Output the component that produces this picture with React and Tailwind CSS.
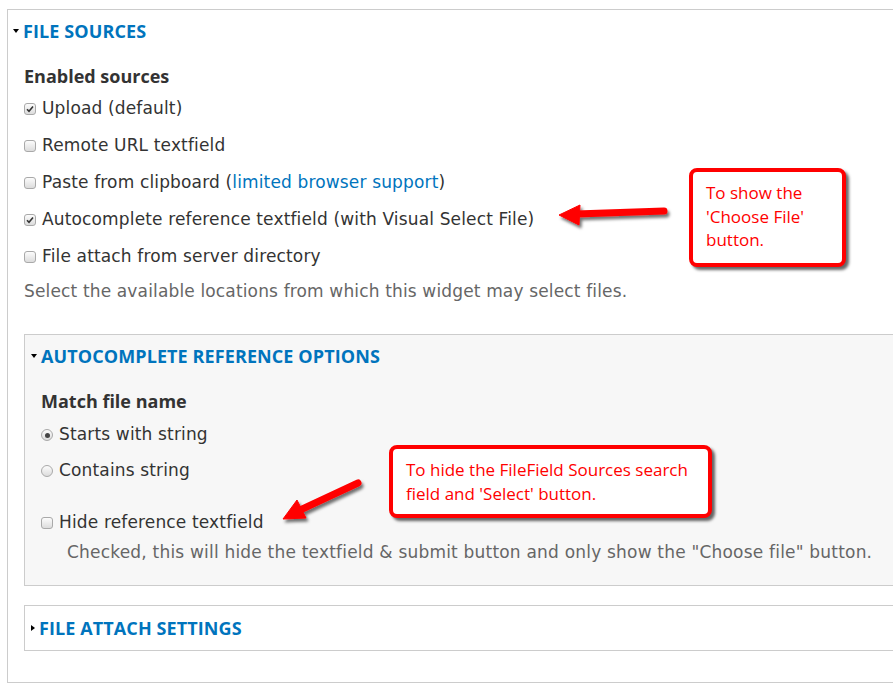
import React from "react";

const body = { fontFamily: '"DejaVu Sans", sans-serif' };
const head = { fontFamily: '"Open Sans", sans-serif' };

function Check({ checked }) {
  return (
    <span className="flex h-[12px] w-[12px] shrink-0 items-center justify-center rounded-[3px] border border-[#a9a9a9] bg-gradient-to-b from-[#fcfcfc] to-[#dcdcdc]">
      {checked && (
        <svg width="8" height="8" viewBox="0 0 8 8">
          <path d="M1 4.2 L3 6.3 L7 1.5" fill="none" stroke="#333" strokeWidth="1.6" />
        </svg>
      )}
    </span>
  );
}

function Radio({ checked }) {
  return (
    <span className="flex h-[12px] w-[12px] shrink-0 items-center justify-center rounded-full border border-[#a9a9a9] bg-gradient-to-b from-[#fcfcfc] to-[#dcdcdc]">
      {checked && <span className="h-[5px] w-[5px] rounded-full bg-[#444]" />}
    </span>
  );
}

function Legend({ open, children }) {
  return (
    <div className="flex h-[24px] items-center">
      {open ? (
        <span className="mr-[4px] h-0 w-0 border-x-[3px] border-t-[4px] border-x-transparent border-t-black" />
      ) : (
        <span className="mr-[4px] h-0 w-0 border-y-[3px] border-l-[4px] border-y-transparent border-l-black" />
      )}
      <span style={head} className="text-[18px] font-bold uppercase tracking-[0.1px] text-[#0074bd]">
        {children}
      </span>
    </div>
  );
}

function Item({ checked, children }) {
  return (
    <div className="flex h-[37px] items-center gap-[6px]">
      <Check checked={checked} />
      <span className="text-[17px] tracking-[0.15px] text-[#333]">{children}</span>
    </div>
  );
}

function Callout({ className, children }) {
  return (
    <div
      style={{ fontFamily: '"Open Sans", sans-serif' }}
      className={
        "absolute rounded-[8px] border-[4px] border-[#ff0000] bg-white text-[17px] leading-[23.5px] text-[#ff0000] shadow-[3px_3px_3px_rgba(0,0,0,0.6)] " +
        className
      }
    >
      {children}
    </div>
  );
}

export default function App() {
  return (
    <div style={body} className="relative h-[694px] w-[893px] overflow-hidden bg-white">
      <div className="pl-[7px] pt-[9px]">
        <div className="w-[920px] border border-[#cccccc] pb-[31px] pl-[5px]">
          <div className="mt-[9px]">
            <Legend open>File sources</Legend>
          </div>
          <div className="pl-[11px]">
            <div style={head} className="mt-[21px] flex h-[24px] items-center text-[18px] font-bold text-[#333]">
              Enabled sources
            </div>
            <div className="mt-[2px]">
              <Item checked>Upload (default)</Item>
              <Item>Remote URL textfield</Item>
              <Item>
                Paste from clipboard (<span className="text-[#0074bd]">limited browser support</span>)
              </Item>
              <Item checked>Autocomplete reference textfield (with Visual Select File)</Item>
              <Item>File attach from server directory</Item>
            </div>
            <div className="mt-[5px] flex h-[24px] items-center text-[17px] tracking-[0.15px] text-[#666]">
              Select the available locations from which this widget may select files.
            </div>

            <div className="mt-[30px] border border-[#cccccc] bg-[#f7f7f7] pb-[20px] pl-[6px]">
              <div className="mt-[9px]">
                <Legend open>Autocomplete reference options</Legend>
              </div>
              <div className="pl-[10px]">
                <div style={head} className="mt-[21px] flex h-[24px] items-center text-[18px] font-bold text-[#333]">
                  Match file name
                </div>
                <div className="mt-[4px] flex h-[36px] items-center gap-[6px]">
                  <Radio checked />
                  <span className="text-[17px] tracking-[0.15px] text-[#333]">Starts with string</span>
                </div>
                <div className="flex h-[36px] items-center gap-[6px]">
                  <Radio />
                  <span className="text-[17px] tracking-[0.15px] text-[#333]">Contains string</span>
                </div>
                <div className="mt-[22px] flex h-[24px] items-center gap-[6px]">
                  <Check />
                  <span className="text-[17px] tracking-[0.15px] text-[#333]">Hide reference textfield</span>
                </div>
                <div className="mt-[6px] flex h-[24px] items-center whitespace-nowrap pl-[26px] text-[17px] tracking-[0.2px] text-[#666]">
                  Checked, this will hide the textfield &amp; submit button and only show the "Choose file" button.
                </div>
              </div>
            </div>

            <div className="mt-[19px] border border-[#cccccc] py-[10px] pl-[6px]">
              <Legend>File attach settings</Legend>
            </div>
          </div>
        </div>
      </div>

      <svg className="pointer-events-none absolute left-0 top-0" width="893" height="694">
        <defs>
          <filter id="sh" x="-20%" y="-50%" width="140%" height="200%">
            <feDropShadow dx="2" dy="3" stdDeviation="1.5" floodColor="#000" floodOpacity="0.55" />
          </filter>
        </defs>
        <g filter="url(#sh)" fill="#ff0000" stroke="#ff0000">
          <line x1="664" y1="211" x2="576" y2="214" strokeWidth="7" strokeLinecap="round" />
          <polygon points="559,215 580,205 579,225" strokeWidth="1" />
          <line x1="358" y1="483" x2="298" y2="511" strokeWidth="7" strokeLinecap="round" />
          <polygon points="283,519 297,500 306,518" strokeWidth="1" />
        </g>
      </svg>

      <Callout className="left-[689px] top-[168px] h-[99px] w-[157px] pl-[13px] pt-[9px]">
        To show the
        <br />
        'Choose File'
        <br />
        button.
      </Callout>
      <Callout className="left-[389px] top-[445px] h-[73px] w-[323px] pl-[13px] pt-[9px]">
        To hide the FileField Sources search
        <br />
        field and 'Select' button.
      </Callout>
    </div>
  );
}
